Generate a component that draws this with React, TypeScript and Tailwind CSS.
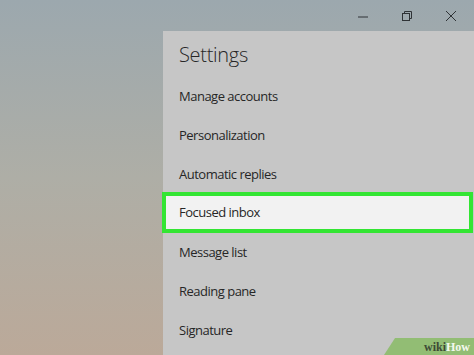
export default function App() {
  const items = [
    "Manage accounts",
    "Personalization",
    "Automatic replies",
    "Focused inbox",
    "Message list",
    "Reading pane",
    "Signature",
  ];

  return (
    <div
      className="relative h-[355px] w-[474px] overflow-hidden bg-gradient-to-b from-[#9ca8ae] via-[#aeaea6] to-[#bba999]"
      style={{ fontFamily: '"Open Sans", "Noto Sans", sans-serif' }}
    >
      {/* window controls */}
      <div className="flex h-[31px] items-center justify-end pr-[1px] text-[#2f3336]">
        <div className="flex w-[44px] justify-center">
          <svg width="12" height="12" viewBox="0 0 12 12">
            <path d="M1 7h10" stroke="currentColor" strokeWidth="1" />
          </svg>
        </div>
        <div className="flex w-[44px] justify-center">
          <svg width="12" height="12" viewBox="0 0 12 12" fill="none" stroke="currentColor" strokeWidth="1">
            <rect x="1.5" y="3.5" width="7" height="7" />
            <path d="M3.5 3.5V1.5h7v7h-2" />
          </svg>
        </div>
        <div className="flex w-[44px] justify-center">
          <svg width="12" height="12" viewBox="0 0 12 12" fill="none" stroke="currentColor" strokeWidth="1">
            <path d="M1 1l10 10M11 1L1 11" />
          </svg>
        </div>
      </div>

      {/* settings pane */}
      <div className="ml-[163px] h-[324px] bg-[#c6c6c6] text-[#262626]">
        <div className="px-4 pt-[10px] text-[20px] font-light leading-[28px] tracking-[-0.3px]">Settings</div>
        <div className="mt-[8px] flex flex-col text-[13px] tracking-[-0.5px]">
          {items.map((label) =>
            label === "Focused inbox" ? (
              <div
                key={label}
                className="-mt-[2px] -ml-px mr-px flex h-[41px] items-center border-4 border-[#33e533] bg-[#f2f2f2] pl-[13px]"
              >
                {label}
              </div>
            ) : (
              <div key={label} className="flex h-[39px] items-center px-4">
                {label}
              </div>
            )
          )}
        </div>
      </div>

      {/* wikiHow mark */}
      <div className="absolute bottom-0 right-0 flex h-[17px] w-[90px] items-center justify-end bg-[#92bd74] pr-[4px] [clip-path:polygon(11px_0,100%_0,100%_100%,0_100%)]">
        <span
          className="text-[12px] font-bold leading-none"
          style={{ fontFamily: '"Liberation Serif", serif' }}
        >
          <span className="text-[#3d4a35]">wiki</span>
          <span className="text-[#f4f8ef]">How</span>
        </span>
      </div>
    </div>
  );
}
